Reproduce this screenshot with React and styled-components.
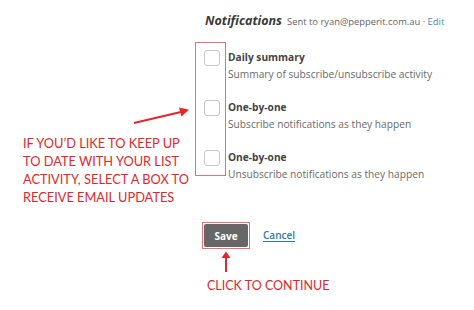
import React from 'react'
import styled, { createGlobalStyle } from 'styled-components'

const GlobalStyle = createGlobalStyle`
  html, body {
    margin: 0;
    padding: 0;
    background: #ffffff;
  }
`

const options = [
  { title: 'Daily summary', text: 'Summary of subscribe/unsubscribe activity' },
  { title: 'One-by-one', text: 'Subscribe notifications as they happen' },
  { title: 'One-by-one', text: 'Unsubscribe notifications as they happen' },
]

const App = () => {
  return (
    <Page>
      <GlobalStyle />
      <NoteColumn>
        <NoteText>
          IF YOU’D LIKE TO KEEP UP<br />
          TO DATE WITH YOUR LIST<br />
          ACTIVITY, SELECT A BOX TO<br />
          RECEIVE EMAIL UPDATES
        </NoteText>
      </NoteColumn>

      <FormColumn>
        <Header>
          <Title>Notifications</Title>
          <SentTo>
            Sent to ryan@pepperit.com.au · <EditLink>Edit</EditLink>
          </SentTo>
        </Header>

        <Options>
          <Highlight>
            <CheckStack>
              {options.map((o, i) => (
                <Checkbox key={i} />
              ))}
            </CheckStack>
          </Highlight>
          <LabelStack>
            {options.map((o, i) => (
              <OptionText key={i}>
                <OptionTitle>{o.title}</OptionTitle>
                <OptionDesc>{o.text}</OptionDesc>
              </OptionText>
            ))}
          </LabelStack>
        </Options>

        <Actions>
          <ButtonHighlight>
            <SaveButton>Save</SaveButton>
          </ButtonHighlight>
          <CancelLink>Cancel</CancelLink>
        </Actions>

        <UpArrow width="12" height="22" viewBox="0 0 12 22">
          <path d="M6 21V5" stroke="#e4262c" strokeWidth="2" />
          <path d="M1.5 7L6 0.5L10.5 7Z" fill="#e4262c" />
        </UpArrow>
        <ClickNote>CLICK TO CONTINUE</ClickNote>
      </FormColumn>

      <PointerArrow width="60" height="20" viewBox="0 0 60 20">
        <path d="M1 16L50 4.5" stroke="#e4262c" strokeWidth="2" />
        <path d="M46 0.5L56 2.8L48.5 9.5Z" fill="#e4262c" />
      </PointerArrow>
    </Page>
  )
}

const Page = styled.div`
  position: relative;
  display: flex;
  width: 474px;
  height: 310px;
  background: #ffffff;
  overflow: hidden;
`

const NoteColumn = styled.div`
  width: 172px;
  padding: 134px 0 0 23px;
`

const NoteText = styled.div`
  font-family: Lato, "Liberation Sans", sans-serif;
  font-size: 12.8px;
  line-height: 18px;
  color: #e4262c;
  white-space: nowrap;
`

const FormColumn = styled.div`
  display: flex;
  flex-direction: column;
  align-items: flex-start;
  padding-top: 12px;
  font-family: "Open Sans", sans-serif;
`

const Header = styled.div`
  display: flex;
  align-items: baseline;
  gap: 5px;
  padding-left: 10px;
  height: 18px;
  line-height: 18px;
  white-space: nowrap;
`

const Title = styled.span`
  font-size: 12.5px;
  font-weight: 700;
  font-style: italic;
  color: #3a3a3a;
`

const SentTo = styled.span`
  font-size: 9.4px;
  color: #666666;
`

const EditLink = styled.span`
  color: #3d8fb8;
`

const Options = styled.div`
  display: flex;
  align-items: flex-start;
  margin-top: 12px;
`

const Highlight = styled.div`
  border: 1px solid #e8707c;
`

const CheckStack = styled.div`
  display: flex;
  flex-direction: column;
  gap: 34px;
  padding: 7px 5px 9px 8px;
`

const Checkbox = styled.div`
  width: 14px;
  height: 14px;
  border: 1px solid #c8c8c8;
  border-radius: 3px;
  background: #ffffff;
`

const LabelStack = styled.div`
  display: flex;
  flex-direction: column;
  gap: 19px;
  padding: 8px 0 0 2px;
`

const OptionText = styled.div`
  display: flex;
  flex-direction: column;
  gap: 3px;
  white-space: nowrap;
`

const OptionTitle = styled.div`
  font-size: 10.2px;
  line-height: 14px;
  font-weight: 700;
  color: #444444;
`

const OptionDesc = styled.div`
  font-size: 10.2px;
  line-height: 14px;
  color: #6a6a6a;
`

const Actions = styled.div`
  display: flex;
  align-items: center;
  gap: 13px;
  margin: 41px 0 0 7px;
`

const ButtonHighlight = styled.div`
  padding: 1px;
  border: 1px solid #e8707c;
`

const SaveButton = styled.div`
  width: 44px;
  height: 23px;
  display: flex;
  align-items: center;
  justify-content: center;
  background: #676767;
  border-radius: 2px;
  color: #ffffff;
  font-size: 10px;
  font-weight: 700;
`

const CancelLink = styled.span`
  font-size: 10px;
  font-weight: 600;
  color: #2b7c9f;
  text-decoration: underline;
  text-underline-offset: 2px;
  margin-bottom: 2px;
`

const UpArrow = styled.svg`
  display: block;
  margin: 2px 0 0 25px;
`

const ClickNote = styled.div`
  margin: 5px 0 0 12px;
  font-family: Lato, "Liberation Sans", sans-serif;
  font-size: 12.5px;
  line-height: 16px;
  color: #e4262c;
  white-space: nowrap;
`

const PointerArrow = styled.svg`
  position: absolute;
  left: 133px;
  top: 107px;
`

export default App
